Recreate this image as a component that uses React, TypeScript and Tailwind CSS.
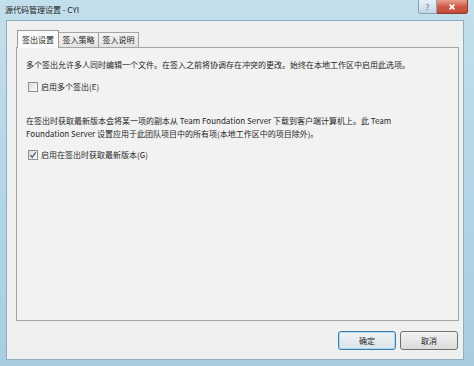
const font = { fontFamily: '"Noto Sans CJK SC", "Open Sans", sans-serif' };

const Checkbox = ({ checked }: { checked?: boolean }) => (
  <span className="relative flex h-[10px] w-[10px] items-center justify-center border border-[#8e8f8f] bg-gradient-to-br from-[#dcdcdc] to-[#fafafa]">
    {checked && (
      <svg viewBox="0 0 10 10" className="h-[8px] w-[8px]">
        <path d="M1.5 5.2 L4 7.8 L8.5 1.8" fill="none" stroke="#4a5f7a" strokeWidth={1.6} />
      </svg>
    )}
  </span>
);

const Tab = ({ label, active }: { label: string; active?: boolean }) =>
  active ? (
    <div className="relative z-10 -mb-px flex h-[18px] w-[42px] items-center justify-center border border-b-0 border-[#9a9a9a] bg-[#fbfbfb] text-[8px] text-[#1e1e1e]">
      {label}
    </div>
  ) : (
    <div className="flex h-[15px] w-[40px] items-center justify-center border border-l-0 border-b-0 border-[#a5a5a5] bg-gradient-to-b from-[#f4f4f4] to-[#e3e3e3] text-[8px] text-[#1e1e1e]">
      {label}
    </div>
  );

export default function App() {
  return (
    <div
      className="flex h-[366px] w-[474px] flex-col overflow-hidden bg-gradient-to-b from-[#c3dfeb] via-[#b4d6e6] to-[#a9cde0]"
      style={font}
    >
      {/* title bar */}
      <div className="flex h-[20px] items-start">
        <span className="pl-[5px] pt-[4px] text-[8px] leading-[12px] text-[#1e1e1e]">源代码管理设置 - CYI</span>
        <div className="ml-auto mr-[6px] flex">
          <div className="flex h-[14px] w-[19px] items-center justify-center rounded-bl-[3px] border border-t-0 border-[#8aa2b6] bg-gradient-to-b from-[#e9f1f7] to-[#c3d6e4] text-[8px] text-[#5a6d80]">
            ?
          </div>
          <div className="flex h-[14px] w-[31px] items-center justify-center rounded-br-[3px] border border-l-0 border-t-0 border-[#8a3b32] bg-gradient-to-b from-[#e8a08f] via-[#cf5a48] to-[#c44a3a]">
            <svg viewBox="0 0 10 10" className="h-[8px] w-[8px]">
              <path d="M2 2 L8 8 M8 2 L2 8" stroke="#fff" strokeWidth={2} />
            </svg>
          </div>
        </div>
      </div>

      {/* client area */}
      <div className="ml-[6px] flex h-[340px] w-[458px] flex-col border border-[#8eaec4] bg-[#f0f0f0] pl-[9px] pt-[9px]">
        <div className="flex items-end pl-px">
          <Tab label="签出设置" active />
          <Tab label="签入策略" />
          <Tab label="签入说明" />
        </div>
        <div className="h-[274px] w-[443px] border border-[#a5a5a5] bg-[#f2f2f2] pl-[9px] text-[8px] leading-[13px] text-[#262626]">
          <p className="mt-[10px]">多个签出允许多人同时编辑一个文件。在签入之前将协调存在冲突的更改。始终在本地工作区中启用此选项。</p>
          <label className="mt-[9px] flex h-[13px] items-center gap-[2px] pl-[2px]">
            <Checkbox />
            <span className="pl-[1px]">启用多个签出(E)</span>
          </label>
          <p className="mt-[21px] w-[385px]">
            在签出时获取最新版本会将某一项的副本从 Team Foundation Server 下载到客户端计算机上。此 Team Foundation Server 设置应用于此团队项目中的所有项(本地工作区中的项目除外)。
          </p>
          <label className="mt-[8px] flex h-[13px] items-center gap-[2px] pl-[2px]">
            <Checkbox checked />
            <span className="pl-[1px]">启用在签出时获取最新版本(G)</span>
          </label>
        </div>
        <div className="mt-[10px] flex justify-end gap-[4px] pr-[5px]">
          <button className="flex h-[19px] w-[58px] items-center justify-center rounded-[3px] border border-[#3d7bad] bg-gradient-to-b from-[#f2f2f2] to-[#d9e4ec] text-[8px] text-[#1e1e1e] shadow-[inset_0_0_0_1px_#a9dcf3]">
            确定
          </button>
          <button className="flex h-[19px] w-[58px] items-center justify-center rounded-[3px] border border-[#707070] bg-gradient-to-b from-[#f2f2f2] to-[#dbdbdb] text-[8px] text-[#1e1e1e]">
            取消
          </button>
        </div>
      </div>
    </div>
  );
}
